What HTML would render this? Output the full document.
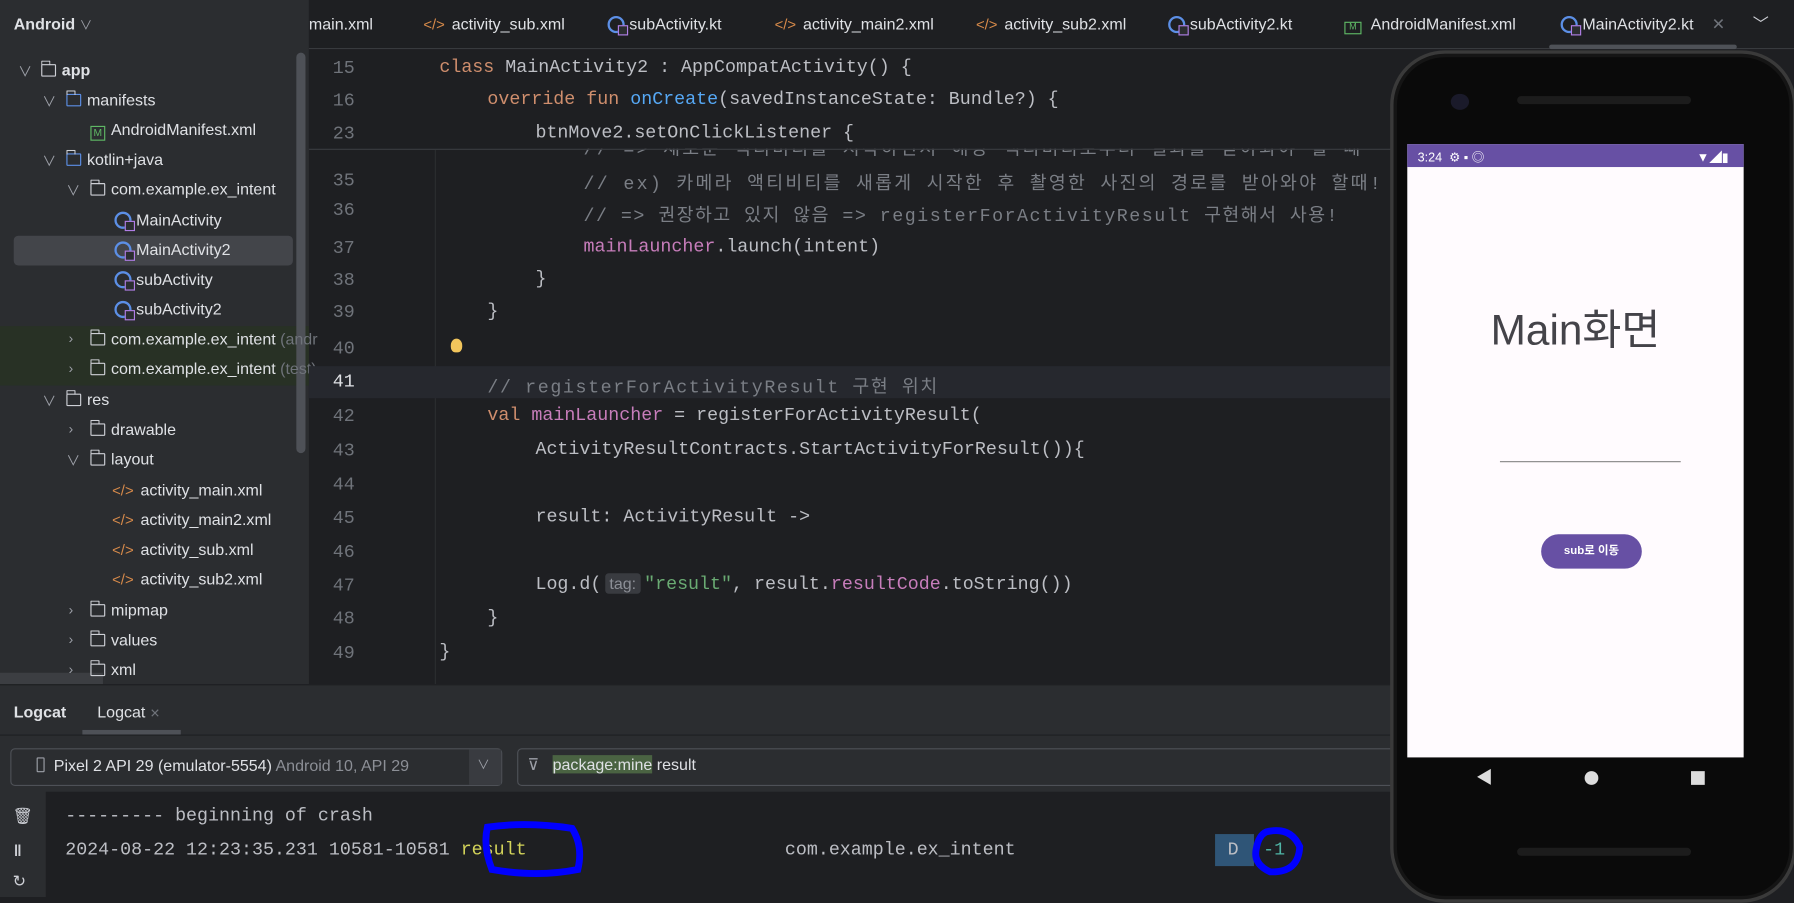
<!DOCTYPE html>
<html><head><meta charset="utf-8"><style>
*{margin:0;padding:0;box-sizing:border-box}
html,body{width:1794px;height:897px;overflow:hidden;background:#1e1f22}
#w{position:absolute;left:0;top:0;width:1568px;height:784px;transform:scale(1.14413,1.14413);transform-origin:0 0;background:#1e1f22;font-family:"Liberation Sans","Noto Sans CJK KR",sans-serif;color:#dfe1e5}
.a{position:absolute;white-space:nowrap}
.t{font-size:14px;color:#dfe1e5}
.m{font-family:"Liberation Mono","Noto Sans CJK KR",monospace;font-size:16px;color:#bcbec4}
.n{font-family:"Liberation Mono",monospace;font-size:16px;color:#6f737a;width:40px;text-align:right}
.k{color:#cf8e6d}.f{color:#56a8f5}.p{color:#c77dbb}.c{color:#7a7e85}.s{color:#6aab73}
.fold{display:inline-block;width:13px;height:11px;border:1.5px solid #ced0d6;border-radius:1px;vertical-align:-1px;margin-right:5px;position:relative}
.fold:before{content:"";position:absolute;left:-1.5px;top:-4px;width:6px;height:3px;border:1.5px solid #ced0d6;border-bottom:none;border-radius:1px 1px 0 0}
.cls{display:inline-block;width:15px;height:15px;border:2px solid #5c8fe6;border-radius:50%;vertical-align:-3px;margin-right:4px;position:relative}
.cls:after{content:"";position:absolute;right:-5px;bottom:-4px;width:7px;height:7px;border:1.5px solid #b07ee6;background:#2b2d30}
.xml{color:#d78a4a;font-size:13px;margin-right:6px}
.ar{color:#9da0a8;font-size:12px;position:absolute}
</style></head><body><div id="w">
<!-- left panel -->
<div class="a" style="left:0;top:0;width:270px;height:598px;background:#2b2d30"></div>
<div class="a" style="left:0;top:285px;width:270px;height:52px;background:#283125"></div>
<div class="a" style="left:12px;top:206px;width:244px;height:26px;background:#43454a;border-radius:4px"></div>
<div class="a" style="left:259px;top:46px;width:8px;height:350px;background:#4e5157;border-radius:4px"></div>
<div class="a" style="left:0;top:588px;width:90px;height:10px;background:#3c3e42"></div>
<div class="a t" style="left:12px;top:13px;font-weight:bold">Android <span style="font-weight:normal;font-size:11px;color:#9da0a8">∨</span></div>
<div class="ar" style="left:16px;top:54px">∨</div><div class="a t" style="left:36px;top:53px;font-weight:bold"><span class="fold"></span>app</div>
<div class="ar" style="left:37px;top:80px">∨</div><div class="a t" style="left:58px;top:79px"><span class="fold" style="border-color:#5c8fe6"></span>manifests</div>
<div class="a t" style="left:79px;top:105px"><span style="display:inline-block;width:13px;height:13px;border:1.5px solid #5fb865;color:#5fb865;font-size:9px;line-height:10px;text-align:center;margin-right:5px;vertical-align:-1px">M</span>AndroidManifest.xml</div>
<div class="ar" style="left:37px;top:132px">∨</div><div class="a t" style="left:58px;top:131px"><span class="fold" style="border-color:#5c8fe6"></span>kotlin+java</div>
<div class="ar" style="left:58px;top:158px">∨</div><div class="a t" style="left:79px;top:157px"><span class="fold"></span>com.example.ex_intent</div>
<div class="a t" style="left:100px;top:184px"><span class="cls"></span>MainActivity</div>
<div class="a t" style="left:100px;top:210px"><span class="cls"></span>MainActivity2</div>
<div class="a t" style="left:100px;top:236px"><span class="cls"></span>subActivity</div>
<div class="a t" style="left:100px;top:262px"><span class="cls"></span>subActivity2</div>
<div class="ar" style="left:60px;top:289px">›</div><div class="a t" style="left:79px;top:288px"><span class="fold"></span>com.example.ex_intent <span style="color:#6f737a">(andr</span></div>
<div class="ar" style="left:60px;top:315px">›</div><div class="a t" style="left:79px;top:314px"><span class="fold"></span>com.example.ex_intent <span style="color:#6f737a">(test)</span></div>
<div class="ar" style="left:37px;top:342px">∨</div><div class="a t" style="left:58px;top:341px"><span class="fold"></span>res</div>
<div class="ar" style="left:60px;top:368px">›</div><div class="a t" style="left:79px;top:367px"><span class="fold"></span>drawable</div>
<div class="ar" style="left:58px;top:394px">∨</div><div class="a t" style="left:79px;top:393px"><span class="fold"></span>layout</div>
<div class="a t" style="left:98px;top:420px"><span class="xml">&lt;/&gt;</span>activity_main.xml</div>
<div class="a t" style="left:98px;top:446px"><span class="xml">&lt;/&gt;</span>activity_main2.xml</div>
<div class="a t" style="left:98px;top:472px"><span class="xml">&lt;/&gt;</span>activity_sub.xml</div>
<div class="a t" style="left:98px;top:498px"><span class="xml">&lt;/&gt;</span>activity_sub2.xml</div>
<div class="ar" style="left:60px;top:526px">›</div><div class="a t" style="left:79px;top:525px"><span class="fold"></span>mipmap</div>
<div class="ar" style="left:60px;top:552px">›</div><div class="a t" style="left:79px;top:551px"><span class="fold"></span>values</div>
<div class="ar" style="left:60px;top:578px">›</div><div class="a t" style="left:79px;top:577px"><span class="fold"></span>xml</div>
<!-- tabs -->
<div class="a" style="left:270px;top:0;width:1298px;height:43px;background:#1e1f22;border-bottom:1px solid #393b40"></div>
<div class="a t" style="left:270px;top:13px">main.xml</div>
<div class="a t" style="left:370px;top:13px"><span class="xml">&lt;/&gt;</span>activity_sub.xml</div>
<div class="a t" style="left:531px;top:13px"><span class="cls"></span>subActivity.kt</div>
<div class="a t" style="left:677px;top:13px"><span class="xml">&lt;/&gt;</span>activity_main2.xml</div>
<div class="a t" style="left:853px;top:13px"><span class="xml">&lt;/&gt;</span>activity_sub2.xml</div>
<div class="a t" style="left:1021px;top:13px"><span class="cls"></span>subActivity2.kt</div>
<div class="a t" style="left:1175px;top:13px"><span style="display:inline-block;width:15px;height:11px;border:1.5px solid #5fb865;color:#5fb865;font-size:8px;line-height:8px;text-align:center;margin-right:8px">M</span>AndroidManifest.xml</div>
<div class="a t" style="left:1364px;top:13px"><span class="cls"></span>MainActivity2.kt <span style="color:#6f737a;margin-left:12px">✕</span></div>
<div class="a t" style="left:1532px;top:11px;color:#ced0d6">﹀</div>
<div class="a" style="left:1354px;top:39px;width:164px;height:4px;background:#4e5157;border-radius:2px"></div>
<!-- editor -->
<div class="a" style="left:380px;top:131px;width:1px;height:467px;background:#2b2d30"></div>
<div class="a" style="left:270px;top:320px;width:1298px;height:28px;background:#26282e"></div>
<div class="a m c" style="left:510px;top:116px;letter-spacing:2px">// =&gt; 새로운 액티비티를 시작하면서 해당 액티비티로부터 결과를 받아와야 할 때</div>
<div class="a" style="left:270px;top:43px;width:1298px;height:87px;background:#1e1f22"></div>
<div class="a" style="left:270px;top:130px;width:1298px;height:1px;background:#393b40"></div>
<div class="a n" style="left:270px;top:51px">15</div><div class="a m" style="left:384px;top:50px"><span class="k">class</span> MainActivity2 : AppCompatActivity() {</div>
<div class="a n" style="left:270px;top:79px">16</div><div class="a m" style="left:426px;top:78px"><span class="k">override fun</span> <span class="f">onCreate</span>(savedInstanceState: Bundle?) {</div>
<div class="a n" style="left:270px;top:108px">23</div><div class="a m" style="left:468px;top:107px">btnMove2.setOnClickListener {</div>
<div class="a n" style="left:270px;top:149px">35</div><div class="a m c" style="left:510px;top:146px;letter-spacing:2px">// ex) 카메라 액티비티를 새롭게 시작한 후 촬영한 사진의 경로를 받아와야 할때!</div>
<div class="a n" style="left:270px;top:175px">36</div><div class="a m c" style="left:510px;top:174px;letter-spacing:1.3px">// =&gt; 권장하고 있지 않음 =&gt; registerForActivityResult 구현해서 사용!</div>
<div class="a n" style="left:270px;top:208px">37</div><div class="a m" style="left:510px;top:207px"><span class="p">mainLauncher</span>.launch(intent)</div>
<div class="a n" style="left:270px;top:236px">38</div><div class="a m" style="left:468px;top:235px">}</div>
<div class="a n" style="left:270px;top:264px">39</div><div class="a m" style="left:426px;top:263px">}</div>
<div class="a n" style="left:270px;top:296px">40</div>
<div class="a" style="left:394px;top:296px;width:10px;height:12px;background:#f2c55c;border-radius:50% 50% 40% 40%"></div>
<div class="a n" style="left:270px;top:325px;color:#dfe1e5">41</div><div class="a m c" style="left:426px;top:324px;letter-spacing:1.4px">// registerForActivityResult 구현 위치</div>
<div class="a n" style="left:270px;top:355px">42</div><div class="a m" style="left:426px;top:354px"><span class="k">val</span> <span class="p">mainLauncher</span> = registerForActivityResult(</div>
<div class="a n" style="left:270px;top:385px">43</div><div class="a m" style="left:468px;top:384px">ActivityResultContracts.StartActivityForResult()){</div>
<div class="a n" style="left:270px;top:415px">44</div>
<div class="a n" style="left:270px;top:444px">45</div><div class="a m" style="left:468px;top:443px">result: ActivityResult -&gt;</div>
<div class="a n" style="left:270px;top:474px">46</div>
<div class="a n" style="left:270px;top:503px">47</div><div class="a m" style="left:468px;top:502px">Log.d(<span style="background:#393b40;color:#8c8f96;font-family:'Liberation Sans';font-size:14px;padding:1px 4px;border-radius:3px;margin:0 3px">tag:</span><span class="s">"result"</span>, result.<span class="p">resultCode</span>.toString())</div>
<div class="a n" style="left:270px;top:532px">48</div><div class="a m" style="left:426px;top:531px">}</div>
<div class="a n" style="left:270px;top:562px">49</div><div class="a m" style="left:384px;top:561px">}</div>
<!-- bottom panel -->
<div class="a" style="left:0;top:598px;width:1568px;height:186px;background:#2b2d30;border-top:1px solid #1e1f22"></div>
<div class="a t" style="left:12px;top:614px;font-weight:bold">Logcat</div>
<div class="a t" style="left:85px;top:614px">Logcat <span style="color:#6f737a;font-size:11px">✕</span></div>
<div class="a" style="left:72px;top:638px;width:86px;height:4px;background:#4e5157"></div>
<div class="a" style="left:0;top:642px;width:1568px;height:1px;background:#1e1f22"></div>
<div class="a" style="left:9px;top:654px;width:430px;height:33px;border:1px solid #4e5157;border-radius:4px;background:#2b2d30"></div>
<div class="a" style="left:410px;top:655px;width:28px;height:31px;background:#393b40"></div>
<div class="a t" style="left:417px;top:660px;font-size:11px;color:#9da0a8">∨</div>
<div class="a" style="left:32px;top:662px;width:7px;height:13px;border:1.5px solid #9da0a8;border-radius:1px"></div>
<div class="a t" style="left:47px;top:661px">Pixel 2 API 29 (emulator-5554) <span style="color:#8c8f96">Android 10, API 29</span></div>
<div class="a" style="left:452px;top:654px;width:1120px;height:33px;border:1px solid #4e5157;border-radius:4px"></div>
<div class="a t" style="left:461px;top:660px;color:#9da0a8">⊽</div>
<div class="a t" style="left:483px;top:660px"><span style="background:#4a6342">package:mine</span> result</div>
<div class="a" style="left:40px;top:692px;width:1528px;height:92px;background:#1e1f22"></div>
<div class="a t" style="left:11px;top:705px;color:#ced0d6">🗑</div>
<div class="a t" style="left:12px;top:735px;color:#ced0d6;font-weight:bold">ǁ</div>
<div class="a t" style="left:11px;top:762px;color:#ced0d6">↻</div>
<div class="a m" style="left:57px;top:704px">--------- beginning of crash</div>
<div class="a m" style="left:57px;top:734px">2024-08-22 12:23:35.231 10581-10581 <span style="color:#d3d35a">result</span></div>
<div class="a m" style="left:686px;top:734px">com.example.ex_intent</div>
<div class="a" style="left:1062px;top:729px;width:34px;height:28px;background:#2f5577"></div>
<div class="a m" style="left:1073px;top:734px">D</div>
<div class="a m" style="left:1104px;top:734px;color:#4fb5a6">-1</div>
<svg class="a" style="left:0;top:0" width="1568" height="784"><g fill="none" stroke="#0000ff" stroke-width="6"><path d="M426 723 Q460 718 500 724 Q510 740 505 760 Q470 767 430 760 Q422 740 426 723Z"/><path d="M1107 727 Q1128 722 1136 740 Q1135 763 1110 762 Q1095 755 1098 742 Q1100 730 1107 727Z"/></g></svg>
<!-- phone -->
<div class="a" style="left:1215px;top:44px;width:355px;height:745px;background:#0a0a0a;border-radius:48px;border:3px solid #3a3a3a;box-shadow:inset 0 0 0 3px #151515"></div>
<div class="a" style="left:1268px;top:82px;width:16px;height:14px;background:#1a1a2a;border-radius:50%"></div>
<div class="a" style="left:1326px;top:84px;width:152px;height:7px;background:#1c1c1c;border-radius:4px"></div>
<div class="a" style="left:1326px;top:741px;width:152px;height:7px;background:#1c1c1c;border-radius:4px"></div>
<div class="a" style="left:1230px;top:126px;width:294px;height:536px;background:#fffbfe"></div>
<div class="a" style="left:1230px;top:126px;width:294px;height:20px;background:#6750a4"></div>
<div class="a" style="left:1239px;top:129px;font-size:11px;color:#fff">3:24 &nbsp;⚙ ▪ ◎</div>
<div class="a" style="left:1483px;top:129px;font-size:11px;color:#fff">▼◢▮</div>
<div class="a" style="left:1230px;top:258px;width:294px;text-align:center;font-size:37px;color:#444349">Main화면</div>
<div class="a" style="left:1311px;top:403px;width:158px;height:1px;background:#888"></div>
<div class="a" style="left:1347px;top:467px;width:88px;height:30px;background:#6750a4;border-radius:15px;color:#fff;font-size:10px;font-weight:bold;text-align:center;line-height:30px">sub로 이동</div>
<div class="a" style="left:1291px;top:672px;width:0;height:0;border-top:7px solid transparent;border-bottom:7px solid transparent;border-right:12px solid #ddd"></div>
<div class="a" style="left:1385px;top:674px;width:12px;height:12px;background:#ddd;border-radius:50%"></div>
<div class="a" style="left:1478px;top:674px;width:12px;height:12px;background:#ddd"></div>
</div></body></html>
